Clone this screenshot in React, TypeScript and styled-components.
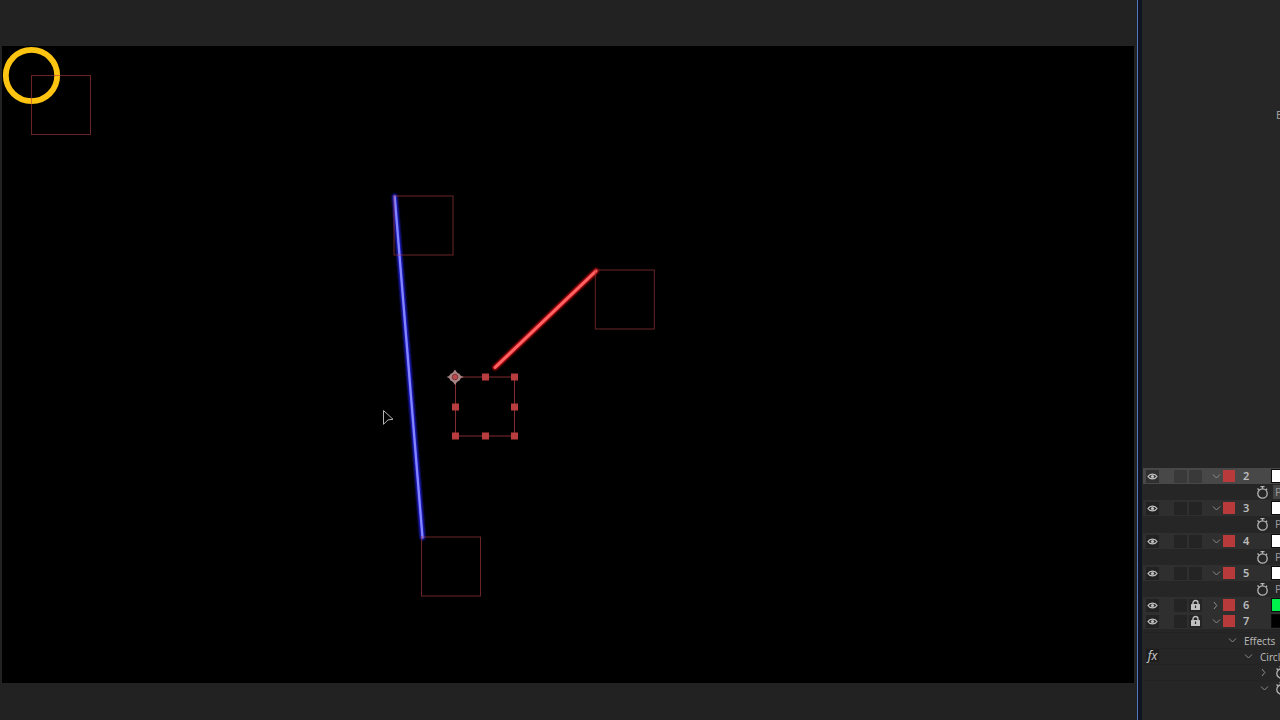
import React from "react";
import styled, { createGlobalStyle } from "styled-components";

const GlobalStyle = createGlobalStyle`
  * { box-sizing: border-box; }
  body {
    margin: 0;
    background: #222222;
    color: #b4b4b4;
    font-family: "Noto Sans", "Open Sans", sans-serif;
    font-size: 11px;
    line-height: 16px;
  }
`;

const Workspace = styled.div`
  display: flex;
  height: 100vh;
  overflow: hidden;
`;

const Viewer = styled.main`
  flex: 1;
  min-width: 0;
  display: flex;
  padding: 46px 3px 37px 2px;
  background: #222222;
`;

const Composition = styled.svg`
  flex: 1;
  min-width: 0;
  height: 100%;
  background: #000000;
  overflow: visible;
`;

const Divider = styled.div`
  flex: none;
  width: 5px;
  background: #0f1422;
  border-left: 1px solid #5674b8;
`;

const Timeline = styled.aside`
  flex: none;
  width: 138px;
  display: flex;
  flex-direction: column;
  justify-content: space-between;
  padding-left: 1px;
  background: #262626;
  overflow: hidden;
  white-space: nowrap;
`;

const PanelHeading = styled.div`
  padding: 107px 0 0 133px;
  color: #a0a0a0;
`;

const LayerList = styled.div`
  height: 252px;
`;

const LayerRow = styled.div<{ $selected?: boolean }>`
  display: grid;
  grid-template-columns: 28px 15px 21px 13px 20px 28px 1fr;
  align-items: center;
  height: 16px;
  padding-left: 3px;
  background: ${(p) => (p.$selected ? "#484848" : "#2f2f2f")};
`;

const IconButton = styled.button<{ $bg?: string; $color?: string }>`
  flex: none;
  display: flex;
  align-items: center;
  justify-content: center;
  width: 13px;
  height: 13px;
  padding: 0;
  border: 0;
  background: ${(p) => p.$bg ?? "transparent"};
  color: ${(p) => p.$color ?? "#c0c0c0"};
  svg { flex: none; }
`;

const LabelColor = styled.span`
  width: 12px;
  height: 12px;
  background: #b93a3a;
`;

const LayerNumber = styled.span`
  color: #bcbcbc;
  font-weight: 600;
`;

const SourceColor = styled.span<{ $color: string }>`
  height: 14px;
  border: 1px solid #0c0c0c;
  border-right: 0;
  background: ${(p) => p.$color};
`;

const PropertyRow = styled.div`
  display: flex;
  align-items: center;
  height: 16px;
  padding-left: 104px;
`;

const Tick = styled.span`
  width: 1px;
  height: 1px;
  background: #444444;
`;

const Stopwatch = styled(IconButton)`
  margin-left: 8px;
`;

const PropertyName = styled.span<{ $active?: boolean }>`
  flex: 1;
  height: 14px;
  line-height: 14px;
  margin-left: 5px;
  padding-left: 2px;
  color: #999999;
  background: ${(p) => (p.$active ? "#444444" : "transparent")};
`;

const EffectTree = styled.div`
  padding-top: 3px;
`;

const EffectRow = styled.div<{ $depth: number }>`
  position: relative;
  display: flex;
  align-items: center;
  gap: ${(p) => (p.$depth > 1 ? 3 : 5)}px;
  height: 16px;
  padding-left: ${(p) => 83 + p.$depth * 16}px;
  border-top: 1px solid #232323;
  font-size: 10px;
`;

const FxButton = styled.button`
  position: absolute;
  left: 3px;
  top: 0;
  width: 13px;
  height: 13px;
  padding: 0;
  border: 0;
  background: #1d1d1d;
  color: #c4c4c4;
  font: italic 12px/10px "Noto Sans", sans-serif;
`;

const EyeIcon = () => (
  <svg width="11" height="9" viewBox="0 0 11 9">
    <path
      d="M1 4.500C2.800 1.300 8.200 1.300 10 4.500 8.200 7.700 2.800 7.700 1 4.500Z"
      fill="none"
      stroke="currentColor"
      strokeWidth="1.300"
    />
    <circle cx="5.500" cy="4.500" r="1.600" fill="currentColor" />
  </svg>
);

const LockIcon = () => (
  <svg width="11" height="12" viewBox="0 0 11 12">
    <path d="M3 5.500V4a2.500 2.500 0 0 1 5 0v1.500" fill="none" stroke="currentColor" strokeWidth="1.400" />
    <rect x="1" y="5" width="9" height="6" rx=".5" fill="currentColor" />
    <path d="M5.500 6.500v2.600" stroke="#2a2a2a" strokeWidth="1.200" />
  </svg>
);

const Chevron = ({ open }: { open: boolean }) => (
  <svg width="9" height="9" viewBox="0 0 9 9" fill="none" stroke="#8d8d8d" strokeWidth="1">
    <path d={open ? "M1 2.500l3.500 3.500L8 2.500" : "M2 1l2.800 3.500L2 8"} />
  </svg>
);

const StopwatchIcon = () => (
  <svg width="15" height="15" viewBox="0 0 15 15" fill="none" stroke="#b4b4b4" strokeWidth="1.300">
    <circle cx="8.500" cy="8.500" r="4.700" />
    <path d="M6.500 1.700h4M8.500 1.700v2M3.500 3.400l1.700 1.500M11.800 4.900l1.300-1.200" />
  </svg>
);

type Layer = { id: number; source: string; locked?: boolean; open?: boolean; selected?: boolean };

const layers: Layer[] = [
  { id: 2, source: "#ffffff", open: true, selected: true },
  { id: 3, source: "#ffffff", open: true },
  { id: 4, source: "#ffffff", open: true },
  { id: 5, source: "#ffffff", open: true },
  { id: 6, source: "#00f04c", locked: true },
  { id: 7, source: "#000000", locked: true, open: true },
];

const LayerBlock = styled.section`
  &:nth-of-type(3) { padding-top: 1px; }
`;

const LayerItem = ({ layer }: { layer: Layer }) => {
  const cell = layer.selected ? "#393939" : "#242424";
  return (
    <LayerBlock>
      <LayerRow $selected={layer.selected}>
        <IconButton $bg={layer.selected ? "#303030" : "#222222"} aria-label={`Toggle layer ${layer.id}`}>
          <EyeIcon />
        </IconButton>
        <IconButton $bg={cell} aria-label="Solo" />
        <IconButton $bg={cell} aria-label="Lock">{layer.locked && <LockIcon />}</IconButton>
        <IconButton aria-label="Expand layer">
          <Chevron open={!!layer.open} />
        </IconButton>
        <LabelColor />
        <LayerNumber>{layer.id}</LayerNumber>
        <SourceColor $color={layer.source} />
      </LayerRow>
      {!layer.locked && (
        <PropertyRow>
          <Tick />
          <Stopwatch aria-label="Animate property">
            <StopwatchIcon />
          </Stopwatch>
          <PropertyName $active={layer.selected}>P</PropertyName>
        </PropertyRow>
      )}
    </LayerBlock>
  );
};

const nulls = [
  [31.5, 75.5],
  [394, 196],
  [595.3, 270],
  [421.5, 537],
];

const handles = [
  [485.5, 377], [514.5, 377], [455.5, 407], [514.5, 407], [455.5, 436], [485.5, 436], [514.5, 436],
];

const Artwork = () => (
  <Composition viewBox="2 46 1132 637" preserveAspectRatio="xMinYMin meet" role="img" aria-label="Composition">
    <defs>
      <filter id="glow" filterUnits="userSpaceOnUse" x="370" y="170" width="260" height="400">
        <feGaussianBlur stdDeviation="1.2" />
      </filter>
      <filter id="core" filterUnits="userSpaceOnUse" x="370" y="170" width="260" height="400">
        <feGaussianBlur stdDeviation=".6" />
      </filter>
    </defs>
    <circle cx="31.500" cy="75.500" r="25.700" fill="none" stroke="#fdc511" strokeWidth="5.800" />
    <g strokeLinecap="round">
      <g filter="url(#glow)" strokeWidth="5">
        <path d="M394.700 196.500L422.500 537.500" stroke="#2020e8" />
        <path d="M495 367.500L596 271" stroke="#e80c14" />
      </g>
      <g filter="url(#core)">
        <path d="M394.700 196.500L422.500 537.500" stroke="#8484ff" strokeWidth="2.300" />
        <path d="M495 367.500L596 271" stroke="#ff6464" strokeWidth="2.800" />
      </g>
    </g>
    <g fill="none" stroke="#b03c40" strokeOpacity=".6">
      {nulls.map(([x, y]) => (
        <rect key={x} x={x} y={y} width="59" height="59" />
      ))}
      <rect x="455.500" y="377" width="59" height="59" strokeOpacity=".75" />
    </g>
    <g fill="#b93c3e">
      {handles.map(([x, y]) => (
        <rect key={`${x}-${y}`} x={x - 3.5} y={y - 3.5} width="7" height="7" />
      ))}
    </g>
    <path d="M455 369.500L457 372.500 459.500 374 461 376 464 377 461 378 459.500 380.500 457 382 455 385 453 382 450.500 380.500 449 378 446.500 377 449 376 450.500 374 453 372.500Z" fill="#a98484" />
    <circle cx="455" cy="377" r="2.800" fill="#c04848" stroke="#6a3038" strokeWidth=".8" />
    <path d="M383.500 410.500L393 419.300l-5 .6-4.500 4.400Z" fill="#000000" stroke="#b4b4b4" strokeWidth="1" />
  </Composition>
);

export default function App() {
  return (
    <>
      <GlobalStyle />
      <Workspace>
        <Viewer>
          <Artwork />
        </Viewer>
        <Divider />
        <Timeline>
          <PanelHeading>E</PanelHeading>
          <LayerList>
            <div>
              {layers.map((layer) => (
                <LayerItem key={layer.id} layer={layer} />
              ))}
            </div>
            <EffectTree>
              <EffectRow $depth={0}>
                <IconButton aria-label="Collapse effects"><Chevron open /></IconButton>
                <span>Effects</span>
              </EffectRow>
              <EffectRow $depth={1}>
                <FxButton aria-label="Toggle effect">fx</FxButton>
                <IconButton aria-label="Collapse circle"><Chevron open /></IconButton>
                <span>Circle</span>
              </EffectRow>
              <EffectRow $depth={2}>
                <IconButton aria-label="Expand property"><Chevron open={false} /></IconButton>
                <IconButton aria-label="Animate property"><StopwatchIcon /></IconButton>
              </EffectRow>
              <EffectRow $depth={2}>
                <IconButton aria-label="Collapse property"><Chevron open /></IconButton>
                <IconButton aria-label="Animate property"><StopwatchIcon /></IconButton>
              </EffectRow>
            </EffectTree>
          </LayerList>
        </Timeline>
      </Workspace>
    </>
  );
}
